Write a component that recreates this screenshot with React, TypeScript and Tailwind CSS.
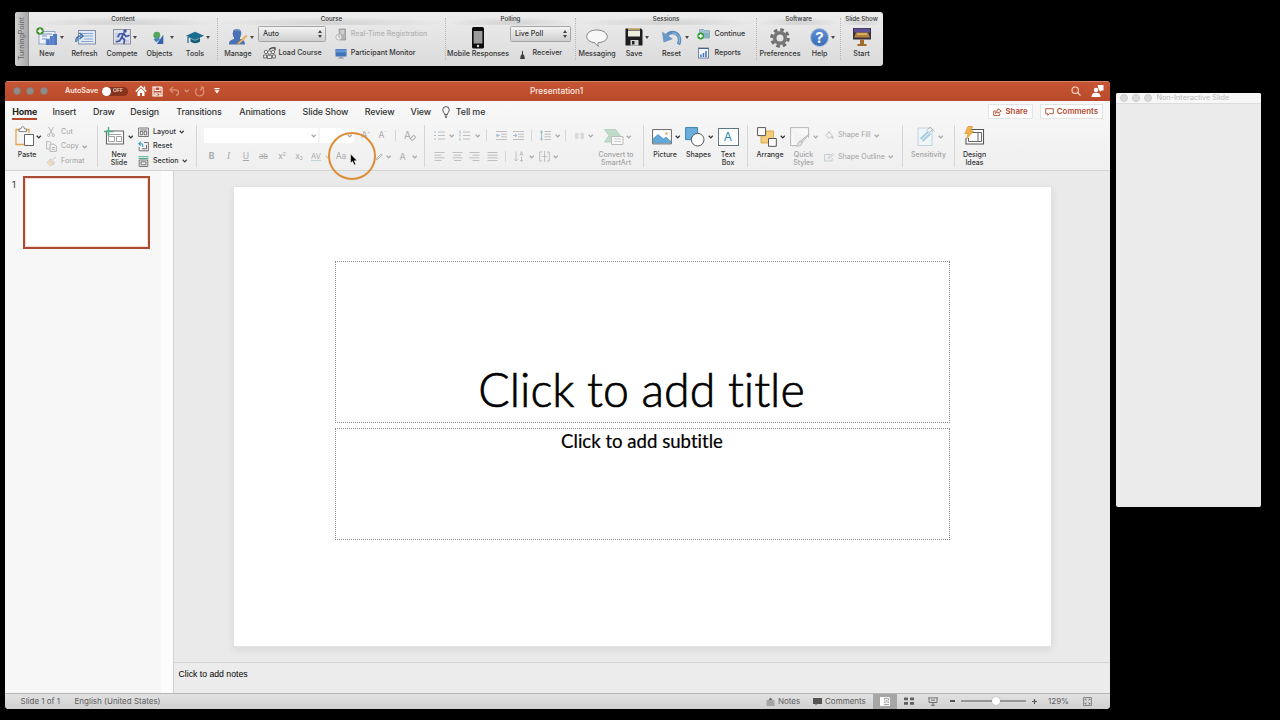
import React from "react";

type P = { children?: React.ReactNode; className?: string };

/* ---------- shared bits ---------- */

const Chevron = ({ className = "text-[#444]" }: P) => (
  <svg viewBox="0 0 6 4" className={`h-[4px] w-[5.500px] shrink-0 ${className}`} fill="none" stroke="currentColor" strokeWidth="1.400">
    <path d="M.8.700 3 3 5.200.700" />
  </svg>
);

const Caret = () => (
  <svg viewBox="0 0 4 3" className="-mr-[6px] ml-[2px] h-[3px] w-[4px] shrink-0">
    <path d="M0 0h4L2 3z" fill="#4a4a4a" />
  </svg>
);

const Slot = ({ children, className = "" }: P) => (
  <div className={`flex h-full shrink-0 items-center justify-center whitespace-nowrap ${className}`}>{children}</div>
);

const Divider = ({ className = "" }: P) => <div className={`w-px shrink-0 bg-[#d6d6d6] ${className}`} />;

/* ---------- TurningPoint toolbar ---------- */

const Group = ({ title, children, className = "" }: P & { title: string }) => (
  <section className={`flex shrink-0 flex-col ${className}`}>
    <h2 className="flex h-[13px] items-center justify-center bg-[radial-gradient(ellipse_50%_45%_at_50%_85%,#d2d2d2,transparent)] text-[6.2px] font-medium whitespace-nowrap text-[#333]">
      {title}
    </h2>
    <div className="flex grow">{children}</div>
  </section>
);

const Tool = ({ label, children, className = "", caret = false }: P & { label: string; caret?: boolean }) => (
  <div className={`flex shrink-0 flex-col items-center ${className}`}>
    <div className="mt-px flex h-[22px] items-center">
      {children}
      {caret && <Caret />}
    </div>
    <span className="flex h-[12px] items-center text-[7.1px] font-medium whitespace-nowrap text-[#333]">{label}</span>
  </div>
);

const Select = ({ value, className = "" }: { value: string; className?: string }) => (
  <div className={`flex h-[16px] items-center justify-between rounded-[1.5px] border border-[#a5a5a5] bg-linear-to-b from-[#f4f4f4] to-[#cfcfcf] pr-[3px] pl-[4px] text-[7.1px] font-medium text-[#333] ${className}`}>
    {value}
    <svg viewBox="0 0 4 8" className="h-[8px] w-[4px]" fill="#444">
      <path d="M0 3h4L2 0zM0 5h4L2 8z" />
    </svg>
  </div>
);

const Dots = ({ className = "" }: P) => <div className={`my-[6px] w-0 shrink-0 border-l border-dotted border-[#b5b5b5] ${className}`} />;

function Toolbar() {
  return (
    <div className="absolute top-[12px] left-[15px] flex h-[54px] w-[868px] overflow-hidden rounded-[3px] bg-linear-to-b from-[#ececec] via-[#e4e4e4] to-[#dadada]">
      <div className="flex w-[14px] shrink-0 items-center justify-center border-r border-[#8e8e8e] bg-linear-to-r from-[#d0d0d0] to-[#a9a9a9]">
        <span className="rotate-180 text-[7.2px] leading-none whitespace-nowrap text-[#666] [writing-mode:vertical-rl]">TurningPoint</span>
      </div>

      <Group title="Content" className="w-[188px]">
        <Tool label="New" caret className="w-[36px]">
          <svg viewBox="0 0 22 20" className="h-[20px] w-[22px]">
            <rect x="3" y="4.500" width="16" height="12.500" fill="#eef2f8" stroke="#8194b5" strokeWidth=".8" />
            <path d="M6 7h10M6 9h5M6 12h5" stroke="#7a93be" strokeWidth="1" />
            <path d="M10 18V12h4V9h3V7h4v11z" fill="#5079c2" />
            <path d="M10 18v-6h4v6M17 18V8" stroke="#86a9e0" strokeWidth=".7" fill="none" />
            <circle cx="4" cy="4" r="3.800" fill="#3f8f2b" />
            <path d="M4 1.700v4.600M1.700 4h4.600" stroke="#fff" strokeWidth="1.500" />
          </svg>
        </Tool>
        <Tool label="Refresh" className="w-[39px]">
          <svg viewBox="0 0 22 18" className="ml-[3px] h-[18px] w-[22px]">
            <rect x="3.500" y="2.500" width="17" height="13.500" fill="#e3e9f2" stroke="#8090aa" />
            <path d="M6 5.500h12M9 8h9M9 11h9M6 13.500h12" stroke="#86a5d4" />
            <path d="M1 14c-.4-4 1.500-6 5-6M4.500 5l3.500 3-3.500 3" stroke="#3f6da8" strokeWidth="1.600" fill="none" />
            <circle cx="2.500" cy="11.500" r="1.600" fill="#6b93c4" />
          </svg>
        </Tool>
        <Tool label="Compete" caret className="w-[36px]">
          <svg viewBox="0 0 18 18" className="-ml-[1px] h-[18px] w-[18px]">
            <rect x=".5" y="1.500" width="17" height="14.500" fill="#dde2ea" stroke="#8f949c" />
            <path d="M2 6h6M2 9h5M2 12h4M12 13h4" stroke="#a9bad6" />
            <circle cx="12" cy="3" r="1.700" fill="#3f55a5" />
            <path d="M11 5 8.500 9.500l3 2-.5 4M8.500 10l-2 3-3 .8M10.500 5.500 6.500 6 5 8.500M11 6l2 2.500 3-1" stroke="#3f55a5" strokeWidth="1.700" fill="none" strokeLinecap="round" />
          </svg>
        </Tool>
        <Tool label="Objects" caret className="w-[39px]">
          <svg viewBox="0 0 14 12" className="-ml-[2px] h-[13px] w-[18px]">
            <circle cx="5" cy="4" r="3.200" fill="#58a65a" />
            <path d="m2 7.500 4-2.200 2 2.500-3.500 2.500z" fill="#4487b8" />
            <path d="M11 3.500v8.500H5z" fill="#3560ad" />
          </svg>
        </Tool>
        <Tool label="Tools" caret className="w-[32px]">
          <svg viewBox="0 0 18 14" className="mt-[2px] h-[14px] w-[18px]">
            <path d="M4.500 5v5.500c2.500 2.300 7 2.300 9.500 0V5z" fill="#155a7a" />
            <path d="M0 4.800 9 .8l9 4-9 4z" fill="#1b6d90" />
            <path d="M9 4.500 2 6.200V12" stroke="#1b6d90" strokeWidth="1.200" fill="none" />
            <path d="M5 7.500 9 9.300l4.500-2" stroke="#d7e6ed" strokeWidth=".6" fill="none" />
          </svg>
        </Tool>
      </Group>
      <Dots />

      <Group title="Course" className="w-[227px]">
        <Tool label="Manage" caret className="w-[40px]">
          <svg viewBox="0 0 20 18" className="h-[18px] w-[20px]">
            <path d="M1 16.500c0-4 2-4.500 5-5.500V9.500C4.500 8 4.500 5 5 3.500 6 .3 12 .3 13 3.500c.5 1.500.3 4.500-1 6V11c3 .8 5 1.500 5 5.500z" fill="#4a71b3" />
            <path d="M7 2.500c2-1 4-1 5 1" stroke="#86a6d9" strokeWidth="1" fill="none" />
            <path d="m9 17 1-2.500 8-7.500 1.500 1.300-8 7.500z" fill="#e09a36" />
            <path d="m10.500 15.800 8-7.500" stroke="#fff0c8" strokeWidth=".6" />
          </svg>
        </Tool>
        <div className="flex w-[68px] shrink-0 flex-col">
          <Select value="Auto" className="mt-[1px]" />
          <div className="mt-[4.500px] flex h-[13px] items-center pl-[5px] text-[7.1px] font-medium whitespace-nowrap text-[#333]">
            <svg viewBox="0 0 13 12" className="mr-[2.500px] h-[12px] w-[13px]" fill="#e9e9e9" stroke="#555" strokeWidth=".8">
              <circle cx="3" cy="5" r="1.700" /><circle cx="10" cy="5" r="1.700" /><circle cx="6.500" cy="5.500" r="1.900" />
              <path d="M.6 11V8h3v3zM9.400 11V8h3v3zM4.400 11.500V8.300h4.200v3.200z" />
              <path d="M6 2.500 9 .8h3v2.500" fill="none" stroke="#333" strokeWidth="1.200" />
            </svg>
            Load Course
          </div>
        </div>
        <div className="flex flex-col pl-[9px] text-[7.1px] font-medium whitespace-nowrap text-[#333]">
          <div className="mt-[1px] flex h-[16px] items-center text-[#b2b2b2]">
            <svg viewBox="0 0 12 13" className="mr-[3.700px] h-[13px] w-[12px]">
              <path d="M4 1h6.500v11H5z" fill="#b4b4b4" stroke="#8c8c8c" strokeWidth=".7" />
              <path d="M5.500 3h3.500M5.500 5h3.500" stroke="#e8e8e8" />
              <circle cx="3.800" cy="9" r="3" fill="#e8e8e8" stroke="#aaa" strokeWidth=".7" />
              <path d="M3.800 7v2h1.500" stroke="#999" strokeWidth=".7" fill="none" />
            </svg>
            Real-Time Registration
          </div>
          <div className="mt-[4.500px] flex h-[13px] items-center">
            <svg viewBox="0 0 12 11" className="mr-[3.700px] h-[11px] w-[12px]">
              <rect x=".5" y="1" width="11" height="7.500" rx=".5" fill="#3f72b7" />
              <path d="M1 1.500h10v3H1z" fill="#6595d2" />
              <path d="M4.500 8.500h3v1.200h1.500v.9H3v-.9h1.500z" fill="#8b97a8" />
            </svg>
            Participant Monitor
          </div>
        </div>
      </Group>
      <Dots />

      <Group title="Polling" className="w-[129px]">
        <Tool label="Mobile Responses" className="w-[64px]">
          <svg viewBox="0 0 12 22" className="mt-px h-[22px] w-[12px]">
            <rect width="12" height="21.500" rx="1.600" fill="#0d0d0d" />
            <rect x="1.600" y="4" width="8.800" height="12.500" fill="#9b9b9b" />
            <circle cx="6" cy="19" r="1.200" fill="#ddd" />
          </svg>
        </Tool>
        <div className="flex flex-col">
          <Select value="Live Poll" className="mt-[1px] w-[61px]" />
          <div className="mt-[4.500px] flex h-[13px] items-center pl-[10px] text-[7.1px] font-medium whitespace-nowrap text-[#333]">
            <svg viewBox="0 0 5 8" className="mt-[4px] mr-[7.500px] h-[8px] w-[5px]" fill="#3d3d3d">
              <path d="M2 0h1v3l1.500 2v1.500L5 8H0l.5-1.500V5L2 3z" />
            </svg>
            Receiver
          </div>
        </div>
      </Group>
      <Dots />

      <Group title="Sessions" className="w-[180px]">
        <Tool label="Messaging" className="w-[42px]">
          <svg viewBox="0 0 22 18" className="mt-[2px] h-[18px] w-[22px]">
            <path d="M10.500 1C4.500 1 .7 4 .7 7.500c0 3 3 5.800 8.300 6.200.5 1.300 1.500 2.800 3.500 3.500-.8-1.300-.8-2.500-.5-3.500 6-.4 9.300-3 9.300-6.200C21.300 4 17 1 10.500 1z" fill="#f7f7f7" stroke="#777" strokeWidth=".9" />
          </svg>
        </Tool>
        <Tool label="Save" caret className="w-[32px]">
          <svg viewBox="0 0 18 18" className="h-[18px] w-[18px]">
            <path d="M.5.500H16l1.500 1.500v15.500H.5z" fill="#1d1d1f" />
            <path d="M3 .5h12v8H3z" fill="#eeeede" />
            <path d="M3 .5h12v1.200H3z" fill="#d7a53e" />
            <path d="M3 1.700h12v1H3z" fill="#555" />
            <path d="M5.500 12h8v5.500h-8z" fill="#d5d5d5" />
            <path d="M7 13h2.500v3.500H7z" fill="#222" />
          </svg>
        </Tool>
        <Tool label="Reset" caret className="w-[43px]">
          <svg viewBox="0 0 22 18" className="h-[18px] w-[22px]">
            <path d="M17.500 16.500c3-6-.5-12-6-12-3 0-5 1.500-6.500 4" stroke="#5f8fc0" strokeWidth="3.400" fill="none" />
            <path d="m1 3.500 1.500 11L12 11z" fill="#6a99c9" />
            <path d="M18 15c2-5-1-10-6.500-10" stroke="#9dbfe2" strokeWidth="1" fill="none" />
          </svg>
        </Tool>
        <div className="flex flex-col pl-[4px] text-[7.1px] font-medium whitespace-nowrap text-[#333]">
          <div className="mt-[1px] flex h-[16px] items-center">
            <svg viewBox="0 0 13 12" className="mr-[4.500px] h-[12px] w-[13px]">
              <path d="M2.500 1.500h4l1 1.200h5V10H2.500z" fill="#a3c3d1" stroke="#6d9eae" strokeWidth=".7" />
              <path d="M3 5h9.500v5H3z" fill="#87b1c4" />
              <circle cx="3.700" cy="8" r="3.400" fill="#36a039" />
              <path d="M3.700 6v4M1.700 8h4" stroke="#fff" strokeWidth="1.300" />
            </svg>
            Continue
          </div>
          <div className="mt-[4.500px] flex h-[13px] items-center">
            <svg viewBox="0 0 13 12" className="mr-[4.500px] h-[12px] w-[13px]">
              <rect x="1.500" y="1" width="10" height="10" fill="#f3f5f9" stroke="#5b6c8f" strokeWidth=".8" />
              <path d="M1.500 1.500h10" stroke="#41629c" strokeWidth="1.200" />
              <path d="M4 10V7.500M6.500 10V6M9 10V4" stroke="#3f74be" strokeWidth="1.500" />
            </svg>
            Reports
          </div>
        </div>
      </Group>
      <Dots />

      <Group title="Software" className="w-[83px]">
        <Tool label="Preferences" className="w-[46px]">
          <svg viewBox="0 0 20 20" className="mt-px h-[20px] w-[20px]">
            <circle cx="10" cy="10" r="8" fill="none" stroke="#6d6d6d" strokeWidth="3.600" strokeDasharray="3.450 2.830" />
            <circle cx="10" cy="10" r="5.300" fill="none" stroke="#757575" strokeWidth="3.600" />
            <circle cx="10" cy="10" r="6.800" fill="none" stroke="#8d8d8d" strokeWidth=".6" />
          </svg>
        </Tool>
        <Tool label="Help" caret className="w-[33px]">
          <div className="mt-px flex h-[19px] w-[19px] items-center justify-center rounded-full border border-[#a9bddb] bg-linear-to-b from-[#5d8fd4] to-[#3a6db5] text-[15px] leading-none font-bold text-white">?</div>
        </Tool>
      </Group>
      <Dots />

      <Group title="Slide Show" className="w-[41px]">
        <Tool label="Start" className="w-[41px]">
          <svg viewBox="0 0 18 20" className="h-[20px] w-[18px]">
            <path d="M0 1h18v11.500H0z" fill="#34303c" />
            <path d="M1 1.500h16v4H1z" fill="#5d4e95" />
            <path d="M3 5.500h12l2 5H1z" fill="#b5813a" />
            <path d="M4 6h10v2H4z" fill="#d9ab61" />
            <path d="M7 12.500h4V17h2.500v2h-9v-2H7z" fill="#a3692a" />
          </svg>
        </Tool>
      </Group>
    </div>
  );
}

/* ---------- PowerPoint window ---------- */

function TitleBar() {
  return (
    <header className="flex h-[20px] shrink-0 items-center bg-linear-to-b from-[#c65534] to-[#b84a2a] shadow-[inset_0_1px_0_#d58267]">
      <div className="flex w-[60px] gap-[5.300px] pl-[8px]">
        <i className="h-[8px] w-[8px] rounded-full border border-[#8a7a75] bg-[#918b89]" />
        <i className="h-[8px] w-[8px] rounded-full border border-[#8a7a75] bg-[#918b89]" />
        <i className="h-[8px] w-[8px] rounded-full border border-[#8a7a75] bg-[#918b89]" />
      </div>
      <span className="w-[37px] text-[7.200px] font-semibold tracking-[-0.005em] whitespace-nowrap text-[#fbe9e3]">AutoSave</span>
      <div className="flex h-[9px] w-[26px] items-center rounded-full bg-[#86331d]">
        <i className="h-[9px] w-[9px] rounded-full bg-white" />
        <span className="pl-[2px] text-[5.200px] font-semibold text-[#f0d5cc]">OFF</span>
      </div>
      <svg viewBox="0 0 12 12" className="ml-[7px] h-[12px] w-[12px]">
        <path d="M.7 6.500 6 1.500l5.300 5" stroke="#fff" strokeWidth="1.300" fill="none" />
        <path d="M2.500 6.700 6 3.500l3.500 3.200V11H7V8H5v3H2.500zM8.800 1.500h1.400v3L8.800 3.200z" fill="#fff" />
      </svg>
      <svg viewBox="0 0 11 11" className="ml-[5px] h-[11px] w-[11px]" fill="none" stroke="#fff" strokeWidth="1.200">
        <path d="M1 1h8l1 1v8H1z" />
        <path d="M3 1v3.500h5V1M3 10V7h5v3" />
        <path d="M4 8.500h1.500" />
      </svg>
      <svg viewBox="0 0 11 10" className="ml-[6px] h-[10px] w-[11px]" fill="none" stroke="#dc957f" strokeWidth="1.200">
        <path d="M4 .8 1 3.800l3 3M1 3.800h5.500c4 0 4 5 .5 5.500" />
      </svg>
      <Chevron className="ml-[4px] text-[#dc957f]" />
      <svg viewBox="0 0 11 11" className="ml-[4.500px] h-[11px] w-[11px]" fill="none" stroke="#dc957f" strokeWidth="1.200">
        <path d="M3 2.500C0 5.500 2 10 5.500 10S11 6.500 9 3.800M6.500 1 9.300 1 9.300 4M9 1.200C8 2 7 3 6.500 4.500" />
      </svg>
      <svg viewBox="0 0 6 6" className="ml-[8.500px] h-[6px] w-[6px]" fill="#fff">
        <path d="M.5 0h5v1.200h-5zM.5 2.300h5L3 5.500z" />
      </svg>
      <h1 className="ml-[310.500px] text-[8.300px] font-medium whitespace-nowrap text-[#fbe9e3]">Presentation1</h1>
      <svg viewBox="0 0 10 10" className="ml-auto h-[10px] w-[10px]" fill="none" stroke="#f6d8ce" strokeWidth="1.100">
        <circle cx="4.200" cy="4.200" r="3.200" />
        <path d="m6.500 6.500 3 3" />
      </svg>
      <svg viewBox="0 0 13 12" className="mr-[6px] ml-[10px] h-[12px] w-[13px]" fill="#fff">
        <path d="M6.500 0H12.500v5.500H10.500L9 7V5.500H8z" />
        <circle cx="5" cy="5" r="2.200" />
        <path d="M.5 12c0-3 1.500-4.200 4.500-4.200S9.500 9 9.500 12z" />
      </svg>
    </header>
  );
}

function Tabs() {
  return (
    <nav className="flex h-[21px] shrink-0 items-center pl-[7.300px] text-[8.900px] font-medium tracking-[-0.014em] whitespace-nowrap text-[#333]">
      <div className="flex h-full w-[40.200px] shrink-0">
        <span className="flex h-[19px] items-center border-b-2 border-[#b54a2b] pt-[4px] text-[8.900px] font-bold tracking-[-0.02em] text-[#222]">Home</span>
      </div>
      <span className="w-[40.600px] shrink-0">Insert</span>
      <span className="w-[37.200px] shrink-0">Draw</span>
      <span className="w-[46px] shrink-0">Design</span>
      <span className="w-[63px] shrink-0">Transitions</span>
      <span className="w-[63.300px] shrink-0">Animations</span>
      <span className="w-[62.300px] shrink-0">Slide Show</span>
      <span className="w-[45.700px] shrink-0">Review</span>
      <span className="w-[31.500px] shrink-0">View</span>
      <svg viewBox="0 0 8 12" className="mr-[5.800px] h-[12px] w-[8px]" fill="none" stroke="#444" strokeWidth=".9">
        <path d="M2.500 8.500C2.500 6.500.8 6 .8 3.800a3.200 3.200 0 0 1 6.400 0C7.200 6 5.500 6.500 5.500 8.500zM2.700 10h2.600M3 11.300h2" />
      </svg>
      <span>Tell me</span>
      <div className="mr-[7px] ml-auto flex gap-[7px] text-[7.900px] font-semibold tracking-normal text-[#b1492e]">
        <button className="flex h-[15px] w-[45px] items-center justify-center gap-[3px] border border-[#e4e4e4] bg-white">
          <svg viewBox="0 0 9 8" className="h-[8px] w-[9px]" fill="none" stroke="currentColor" strokeWidth=".9">
            <path d="M2.500 3H.7v4.400h6V5.500M5 .7 8.300 3 5 5.200V4C3.800 4 3 4.500 2.500 5.500 2.600 3.500 3.500 2.200 5 2z" />
          </svg>
          Share
        </button>
        <button className="flex h-[15px] w-[63px] items-center justify-center gap-[3px] border border-[#e4e4e4] bg-white">
          <svg viewBox="0 0 9 8" className="h-[8px] w-[9px]" fill="none" stroke="currentColor" strokeWidth=".9">
            <path d="M.7.700h7.600v5H4.500L2.700 7.300V5.700h-2z" />
          </svg>
          Comments
        </button>
      </div>
    </nav>
  );
}

const Big = ({ icon, lines, className = "", muted = false }: { icon: React.ReactNode; lines: string[]; className?: string; muted?: boolean }) => (
  <div className={`flex shrink-0 flex-col items-center ${className}`}>
    <div className="mt-[4px] flex h-[21px] items-center">{icon}</div>
    <div className={`mt-[4px] flex flex-col items-center text-[7px] leading-[8px] font-medium whitespace-nowrap ${muted ? "text-[#a3a3a3]" : "text-[#333]"}`}>
      {lines.map((l) => (
        <span key={l}>{l}</span>
      ))}
    </div>
  </div>
);

const Row = ({ icon, children, chevron, muted = false }: P & { icon: React.ReactNode; chevron?: boolean; muted?: boolean }) => (
  <div className={`flex h-[14.500px] items-center text-[7.100px] whitespace-nowrap ${muted ? "text-[#a3a3a3]" : "font-medium text-[#333]"}`}>
    <span className="flex w-[15px] items-center">{icon}</span>
    {children}
    {chevron && <Chevron className={muted ? "ml-[3.500px] text-[#a3a3a3]" : "ml-[3.500px] text-[#444]"} />}
  </div>
);

const Lines = ({ d, accent }: { d: string; accent?: string }) => (
  <svg viewBox="0 0 11 11" className="h-[11px] w-[11px]" fill="none" stroke="#b9b9b9" strokeWidth=".9">
    <path d={d} />
    {accent && <path d={accent} stroke="#9fc5d4" strokeWidth="1.200" />}
  </svg>
);

const Dim = () => <Chevron className="text-[#a8a8a8]" />;

function Ribbon() {
  return (
    <div className="flex h-[49px] shrink-0 border-b border-[#d3d3d3]">
      {/* Clipboard */}
      <div className="flex w-[92px] shrink-0">
        <Big
          className="ml-[5px] w-[34px]"
          lines={["Paste"]}
          icon={
            <>
              <svg viewBox="0 0 20 21" className="-ml-[4px] h-[21px] w-[20px]" fill="none">
                <path d="M4 3.500H1v15h8M11 3.500h3V7" stroke="#e3a44c" strokeWidth="1.300" />
                <path d="M4 5.500V3h2c0-3 3.500-3 3.500 0h2v2.500z" fill="#fff" stroke="#777" strokeWidth=".9" />
                <path d="M9.500 8.500h9v11h-9z" fill="#fff" stroke="#666" />
              </svg>
              <Chevron className="-mr-[6px] ml-[1.500px] text-[#333]" />
            </>
          }
        />
        <div className="flex flex-col pt-[3px] pl-[2px]">
          <Row muted icon={
            <svg viewBox="0 0 8 10" className="ml-px h-[10px] w-[8px]" fill="none" stroke="#b0b0b0" strokeWidth=".9">
              <path d="M1.500 0 5.500 7M6.500 0l-4 7" /><circle cx="1.700" cy="8.300" r="1.200" /><circle cx="6.300" cy="8.300" r="1.200" />
            </svg>}>Cut</Row>
          <Row muted chevron icon={
            <svg viewBox="0 0 11 11" className="h-[11px] w-[11px]" fill="none" stroke="#b0b0b0" strokeWidth=".9">
              <path d="M4 8H.6V.6h3L5 2v1M4 3.200h4l2.400 2v5.200H4zM5.800 6.500h3M5.800 8.300h3" />
            </svg>}>Copy</Row>
          <Row muted icon={
            <svg viewBox="0 0 11 11" className="h-[11px] w-[11px]" fill="none" stroke="#b5b5b5" strokeWidth=".9">
              <path d="M7 3.500 9.500 1M4.500 3l4 4-1.200 1.200-4-4z" /><path d="M3.300 4.500 1 6.500 4.500 10l2.500-2z" fill="#f2e2c5" stroke="#ddc9a6" />
            </svg>}>Format</Row>
        </div>
      </div>
      <Divider className="my-[3px]" />

      {/* Slides */}
      <div className="flex w-[98px] shrink-0">
        <Big
          className="ml-[4px] w-[34px]"
          lines={["New", "Slide"]}
          icon={
            <>
              <svg viewBox="0 0 21 21" className="-ml-[9px] h-[21px] w-[21px]" fill="none">
                <path d="M2.500 5h17v13h-17z" fill="#fff" stroke="#666" strokeWidth="1.100" />
                <path d="M5 8.500h12M4.500 10.500h6v5h-6zM12.500 10.500h5v5h-5z" stroke="#888" strokeWidth=".8" />
                <path d="M4.500 1v9M0 5.500h9.500" stroke="#4fae86" strokeWidth="1.400" />
              </svg>
              <Chevron className="-mr-[8px] ml-[3px] text-[#333]" />
            </>
          }
        />
        <div className="flex flex-col pt-[3px] pl-[2px]">
          <Row chevron icon={
            <svg viewBox="0 0 11 11" className="h-[11px] w-[11px]" fill="none" stroke="#666" strokeWidth=".9">
              <path d="M.6 1h9.800v8.500H.6zM2 3h7M2.300 4.500h2.500v3.300H2.300zM6.200 4.500h2.500v3.300H6.200z" />
            </svg>}>Layout</Row>
          <Row icon={
            <svg viewBox="0 0 11 11" className="h-[11px] w-[11px]" fill="none" stroke="#666" strokeWidth=".9">
              <path d="M6 1.500h4.400v8.300H1.200V6M4 7.800h4.500V4" /><path d="M3 .7.800 2.700 3 4.700M1 2.700h2.500C5 2.700 5 5 4.500 6" stroke="#3a9bc4" strokeWidth="1.100" />
            </svg>}>Reset</Row>
          <Row chevron icon={
            <svg viewBox="0 0 11 11" className="h-[11px] w-[11px]" fill="none" stroke="#666" strokeWidth=".9">
              <path d="M1.200 4h8.600v6.500H1.200zM3 5.800h5v3H3z" /><path d="M.5.700h10M.5 2.500h10" stroke="#3fa583" />
            </svg>}>Section</Row>
        </div>
      </div>
      <Divider className="my-[3px]" />

      {/* Font */}
      <div className="flex w-[227px] shrink-0 flex-col pl-[7px] text-[8.500px] text-[#aaa]">
        <div className="mt-[6px] flex h-[15px]">
          <div className="flex h-[15px] w-[114px] shrink-0 items-center justify-end bg-white pr-[2px]"><Dim /></div>
          <div className="ml-[2px] flex h-[15px] w-[34px] shrink-0 items-center justify-end bg-white pr-[2px]"><Dim /></div>
          <Slot className="ml-[2px] w-[19px] text-[9.500px]">A<sup className="text-[5px]">^</sup></Slot>
          <Slot className="w-[15px] text-[8.500px]">A<sup className="text-[5px]">ˇ</sup></Slot>
          <Divider className="mx-[5px] my-[2px]" />
          <Slot className="w-[18px] text-[10px]">A<i className="mt-[4px] -ml-px h-[4px] w-[6px] -rotate-45 rounded-[1px] border border-[#b5b5b5]" /></Slot>
        </div>
        <div className="mt-[6px] flex h-[15px]">
          <Slot className="w-[15px] font-bold">B</Slot>
          <Slot className="w-[19px] font-['Liberation_Serif',serif] text-[9.500px] italic">I</Slot>
          <Slot className="w-[16px] underline">U</Slot>
          <Slot className="w-[19px] text-[7.500px] line-through">ab</Slot>
          <Slot className="w-[18px]">x<sup className="text-[5px]">2</sup></Slot>
          <Slot className="w-[16px]">x<sub className="text-[5px]">2</sub></Slot>
          <Slot className="w-[18px] flex-col text-[7.500px] leading-[7px]">AV<i className="h-px w-[10px] bg-[#c5d3da]" /></Slot>
          <Slot className="w-[6px]"><Chevron className="text-[#e3c4ab]" /></Slot>
          <Slot className="w-[20px]">Aa</Slot>
          <Slot className="w-[6px]" />
          <Slot className="w-[28px] justify-end">
            <svg viewBox="0 0 8 8" className="mr-[2px] h-[8px] w-[8px]" fill="none" stroke="#b5b5b5"><path d="m1 7 1-2L6 1l1.200 1L3 6z" /></svg>
          </Slot>
          <Slot className="w-[8px]"><Dim /></Slot>
          <Slot className="w-[19px] text-[9px]">A</Slot>
          <Slot className="w-[5px]"><Dim /></Slot>
        </div>
      </div>
      <Divider className="my-[3px]" />

      {/* Paragraph */}
      <div className="flex w-[218px] shrink-0">
        <div className="flex w-[164px] shrink-0 flex-col pl-[4px]">
          <div className="mt-[6px] flex h-[15px]">
            <Slot className="w-[20px]"><Lines d="M4 2h7M4 5.500h7M4 9h7" accent="M0 2h2M0 5.500h2M0 9h2" /></Slot>
            <Slot className="w-[5px]"><Dim /></Slot>
            <Slot className="w-[21px]"><Lines d="M4 2h7M4 5.500h7M4 9h7" accent="M1 .5v3M1 4.500v2M1 8v2.500" /></Slot>
            <Slot className="w-[5px]"><Dim /></Slot>
            <Divider className="mx-[6px] my-[2px]" />
            <Slot className="w-[17px]"><Lines d="M0 1.500h11M5 4.200h6M5 6.800h6M0 9.500h11" accent="M4 5.500H.5M2 4 .5 5.500 2 7" /></Slot>
            <Slot className="w-[17px]"><Lines d="M0 1.500h11M5 4.200h6M5 6.800h6M0 9.500h11" accent="M0 5.500h3.500M2 4l1.500 1.500L2 7" /></Slot>
            <Divider className="mr-[4px] ml-[4px] my-[2px]" />
            <Slot className="w-[19px]"><Lines d="M4.500 1.500H11M4.500 4.200H11M4.500 6.800H11M4.500 9.500H11" accent="M1.500 1v9M.3 2.500 1.500 1l1.200 1.500M.3 8.500 1.500 10l1.200-1.500" /></Slot>
            <Slot className="w-[5px]"><Dim /></Slot>
            <Divider className="mx-[5px] my-[2px]" />
            <Slot className="w-[16px]"><Lines d="M1 4h3.500M1 6h3.500M1 8h3.500M6.500 4H10M6.500 6H10M6.500 8H10" /></Slot>
            <Slot className="w-[7px]"><Dim /></Slot>
          </div>
          <div className="mt-[6px] flex h-[15px]">
            <Slot className="w-[20px]"><Lines d="M.5 1.500h10M.5 4.200h7M.5 6.800h10M.5 9.500h7" /></Slot>
            <Slot className="w-[16px]"><Lines d="M.5 1.500h10M2 4.200h7M.5 6.800h10M2 9.500h7" /></Slot>
            <Slot className="w-[18px]"><Lines d="M.5 1.500h10M3.500 4.200h7M.5 6.800h10M3.500 9.500h7" /></Slot>
            <Slot className="w-[18px]"><Lines d="M.5 1.500h10M.5 4.200h10M.5 6.800h10M.5 9.500h10" /></Slot>
            <Divider className="mx-[4px] my-[2px]" />
            <Slot className="w-[19px]"><Lines d="M2 .5v9.500M.5 8.500 2 10l1.500-1.500M6 4.500 7.500.5 9 4.500M6.500 3.500h2M7.500 5.500v5M6 9l1.500 1.500L9 9" /></Slot>
            <Slot className="w-[5px]"><Dim /></Slot>
            <Slot className="w-[20px]"><Lines d="M3 1H.7v9H3M8 1h2.300v9H8M5.500 0v11M3 5.500h5" /></Slot>
            <Slot className="w-[4px]"><Dim /></Slot>
          </div>
        </div>
        <Big
          muted
          className="w-[54px]"
          lines={["Convert to", "SmartArt"]}
          icon={
            <>
              <svg viewBox="0 0 20 18" className="-ml-[4px] h-[18px] w-[20px]">
                <path d="M.5 1.500h11L16.500 8 12 14H.5L5 7.500z" fill="#c0dcc8" stroke="#a3c9ae" strokeWidth=".7" />
                <path d="M7.500 8.500h11.500v8H7.500z" fill="#fafafa" stroke="#bbb" />
                <path d="M10 11h7M10 13.500h7" stroke="#ccc" />
              </svg>
              <Chevron className="-mr-[8px] ml-[2px] text-[#a8a8a8]" />
            </>
          }
        />
      </div>
      <Divider className="my-[3px]" />

      {/* Insert */}
      <div className="flex w-[103px] shrink-0">
        <Big
          className="ml-[4px] w-[34px]"
          lines={["Picture"]}
          icon={
            <>
              <svg viewBox="0 0 20 16" className="mt-[1px] -ml-[6px] h-[16px] w-[20px]">
                <path d="M.6.600h18.800v14.300H.6z" fill="#fff" stroke="#666" />
                <path d="M1.500 13.800V9.500l4.500-4 5.500 4.500 2.500-2 4.500 4v1.800z" fill="#62aadb" stroke="#377eb0" strokeWidth=".6" />
                <circle cx="14.500" cy="4.500" r="1.300" fill="#e7b24e" />
              </svg>
              <Chevron className="-mr-[8px] ml-[3px] text-[#333]" />
            </>
          }
        />
        <Big
          className="w-[33px]"
          lines={["Shapes"]}
          icon={
            <>
              <svg viewBox="0 0 20 20" className="-ml-[6px] h-[20px] w-[20px]">
                <path d="M.6.600h12v12H.6z" fill="#69aedd" stroke="#3d83b5" />
                <circle cx="12.700" cy="12.700" r="6.300" fill="#fff" stroke="#555" />
              </svg>
              <Chevron className="-mr-[8px] ml-[3px] text-[#333]" />
            </>
          }
        />
        <Big
          className="w-[26px]"
          lines={["Text", "Box"]}
          icon={
            <div className="flex h-[18px] w-[21px] items-center justify-center border border-[#5d7885] bg-white text-[12px] leading-none text-[#2f86b8]">A</div>
          }
        />
      </div>
      <Divider className="my-[3px]" />

      {/* Arrange */}
      <div className="flex w-[154px] shrink-0">
        <Big
          className="ml-[5px] w-[34px]"
          lines={["Arrange"]}
          icon={
            <>
              <svg viewBox="0 0 20 20" className="-ml-[6px] h-[20px] w-[20px]">
                <path d="M4 4h12.500v12H4z" fill="#f3cd7c" stroke="#dca94c" />
                <path d="M.6.600h8v8h-8zM11.500 11.500h7.800v7.800h-7.800z" fill="#fff" stroke="#555" />
              </svg>
              <Chevron className="-mr-[8px] ml-[3px] text-[#333]" />
            </>
          }
        />
        <Big
          muted
          className="w-[33px]"
          lines={["Quick", "Styles"]}
          icon={
            <>
              <svg viewBox="0 0 20 20" className="-ml-[6px] h-[20px] w-[20px]" fill="none" stroke="#b5b5b5">
                <path d="M.6.600h18v10M.6.600v18h6" fill="#f8f8f8" />
                <path d="m19 7.500-7 8-1.500-1.500 8-6.500zM10.500 14c-2 0-2 3-4.500 5 3 .5 6-.5 6-3.500z" fill="#dce4e9" />
              </svg>
              <Chevron className="-mr-[8px] ml-[3px] text-[#a8a8a8]" />
            </>
          }
        />
        <div className="flex flex-col pt-[6px] pl-[4px]">
          <div className="flex h-[15px] items-center text-[7.100px] whitespace-nowrap text-[#a3a3a3]">
            <svg viewBox="0 0 9 9" className="mr-[4px] ml-[1px] h-[9px] w-[9px]" fill="none" stroke="#b8b8b8" strokeWidth=".8">
              <path d="M4 1 1 4.500 4 7.500l3-3zM4 1V0M7.500 5c1 1.500 1 2.500 0 2.500s-1-1 0-2.500" />
            </svg>
            Shape Fill
            <Chevron className="ml-[3.500px] text-[#a8a8a8]" />
          </div>
          <div className="mt-[6.500px] flex h-[15px] items-center text-[7.100px] whitespace-nowrap text-[#a3a3a3]">
            <svg viewBox="0 0 10 9" className="mr-[4px] h-[9px] w-[10px]" fill="none" stroke="#b5c3ca" strokeWidth=".8">
              <path d="M6 1.500H.6V8h7.500V5M4 5.500l.5-1.500L8.500.5l1 1L5.500 5z" />
            </svg>
            Shape Outline
            <Chevron className="ml-[3.500px] text-[#a8a8a8]" />
          </div>
        </div>
      </div>
      <Divider className="my-[3px]" />

      <div className="flex w-[51px] shrink-0">
        <Big
          muted
          className="w-[51px]"
          lines={["Sensitivity"]}
          icon={
            <>
              <svg viewBox="0 0 20 21" className="-ml-[4px] h-[21px] w-[20px]" fill="none">
                <path d="M2 2h14v17.500H2z" fill="#f0f5f8" stroke="#c2d3dc" />
                <path d="m4.500 13 8-7.500M6.500 15l8-7.500" stroke="#a7cde0" strokeWidth="2" />
                <path d="M11 4.500 14 1l2.500 2.500M13.500 6.500 17 3.500l1.500 2" stroke="#aebcc4" />
              </svg>
              <Chevron className="-mr-[6px] ml-[2px] text-[#a8a8a8]" />
            </>
          }
        />
      </div>
      <Divider className="my-[3px]" />

      <Big
        className="w-[39px]"
        lines={["Design", "Ideas"]}
        icon={
          <svg viewBox="0 0 21 20" className="-mt-[2px] h-[20px] w-[21px]" fill="none">
            <path d="M4 3.500h15.500v14.500H2V12" fill="#fff" stroke="#555" strokeWidth="1.100" />
            <path d="M8 6.500h9.500M14 6.500V15.500M4.500 15.500h13v-9M4.500 12v3.500" stroke="#666" />
            <path d="M4 .5h4.500L6.500 5h3L2.500 13 4 7.500H.8z" fill="#f0b44c" stroke="#d8912d" strokeWidth=".7" />
          </svg>
        }
      />
    </div>
  );
}

function Workspace() {
  return (
    <div className="flex grow">
      <aside className="flex w-[156px] shrink-0 bg-[#f7f7f7] pt-[5px] text-[9px] text-[#333]">
        <span className="w-[18px] pt-[3px] pl-[7px] leading-[12px]">1</span>
        <div className="h-[73px] w-[127px] border-2 border-[#ab4b33] bg-white shadow-[inset_0_0_0_1px_#f3d9d1]" />
      </aside>
      <div className="w-[13px] shrink-0 border-r border-[#d2d2d2] bg-[#fcfcfc]" />
      <main className="flex grow flex-col bg-[#eaeaea]">
        <div className="flex h-[491px] shrink-0 pt-[15px] pl-[59px]">
          <div className="flex h-[461px] w-[819px] flex-col border border-[#e2e2e2] bg-white pt-[74px] pl-[101px] font-[Lato,sans-serif] text-black shadow-[0_3px_8px_#00000014] [font-variant-ligatures:none]">
            <div className="flex h-[162px] w-[615px] items-end justify-center border border-dotted border-[#888] pr-[2px] text-[46.500px] leading-[66px] font-light whitespace-nowrap [-webkit-text-stroke:0.7px_#000]">
              Click to add title
            </div>
            <div className="mt-[5px] flex h-[112px] w-[615px] items-start justify-center border border-dotted border-[#888] pr-[1px] text-[18.600px] leading-[25px] whitespace-nowrap [-webkit-text-stroke:0.2px_#000]">
              Click to add subtitle
            </div>
          </div>
        </div>
        <div className="flex grow border-t border-[#d2d2d2] bg-[#ececec] pt-[5px] pl-[4.500px] font-['Liberation_Sans',sans-serif] text-[8.700px] leading-[12px] text-black">Click to add notes</div>
      </main>
    </div>
  );
}

function StatusBar() {
  return (
    <footer className="flex h-[16px] shrink-0 items-center border-t border-[#b5b5b5] bg-linear-to-b from-[#e2e2e2] to-[#d0d0d0] pb-[1px] pl-[15.500px] text-[8px] whitespace-nowrap text-[#5c5c5c]">
      <span className="w-[54px] shrink-0">Slide 1 of 1</span>
      <span>English (United States)</span>
      <div className="ml-auto flex h-full w-[344px] shrink-0 items-center">
        <svg viewBox="0 0 9 9" className="mr-[3px] h-[9px] w-[9px]" fill="none" stroke="#666" strokeWidth=".9">
          <path d="M.5 4h8M.5 6h8M.5 8h8" /><path d="M4.500.500 6.500 3h-4z" fill="#666" stroke="none" />
        </svg>
        <span className="w-[35px] shrink-0">Notes</span>
        <svg viewBox="0 0 9 9" className="mr-[3px] h-[9px] w-[9px]" fill="#555"><path d="M0 1h9v6H4L2.500 8.800V7H0z" /></svg>
        <span className="w-[48px] shrink-0">Comments</span>
        <div className="-mb-px flex h-[15px] w-[24px] shrink-0 items-center justify-center bg-[#a6a6a6]">
          <svg viewBox="0 0 10 9" className="h-[9px] w-[10px]" fill="none" stroke="#fff" strokeWidth=".9"><path d="M.5.500h9v8h-9zM3.500.500v8M5 2.500h3v2.500H5zM3.500 6.500h6" /><path d="M.5.500h2.500v8H.5z" fill="#fff" /></svg>
        </div>
        <Slot className="w-[24px]">
          <svg viewBox="0 0 10 8" className="h-[8px] w-[10px]" fill="#606060"><path d="M0 .5h4v2.700H0zM6 .5h4v2.700H6zM0 5h4v2.700H0zM6 5h4v2.700H6z" /></svg>
        </Slot>
        <Slot className="w-[24px]">
          <svg viewBox="0 0 10 9" className="h-[9px] w-[10px]" fill="none" stroke="#666" strokeWidth=".9"><path d="M0 .9h10M1 1v4.500h8V1M3 3.200h4M5 5.500V8M3 8.300h4" /></svg>
        </Slot>
        <Slot className="w-[15px]"><i className="h-[1.500px] w-[5px] bg-[#555]" /></Slot>
        <div className="ml-[1px] flex h-full w-[65px] shrink-0 items-center">
          <i className="h-[2px] w-[31px] bg-[#979797]" />
          <i className="h-[8px] w-[8px] rounded-full bg-white shadow-[0_0_1px_#777]" />
          <i className="h-[2px] w-[26px] bg-[#979797]" />
        </div>
        <Slot className="w-[16px]">
          <svg viewBox="0 0 5 5" className="h-[5px] w-[5px]" stroke="#555" strokeWidth="1.200"><path d="M2.500 0v5M0 2.500h5" /></svg>
        </Slot>
        <span className="ml-[6px] w-[34.500px] shrink-0">129%</span>
        <svg viewBox="0 0 9 9" className="h-[9px] w-[9px]" fill="none" stroke="#777" strokeWidth=".8">
          <path d="M.5.500h8v8h-8zM2 3.500V2h1.500M5.500 2H7v1.500M7 5.500V7H5.500M3.500 7H2V5.500M2 2l1.500 1.500M7 2 5.500 3.500M2 7l1.500-1.500M7 7 5.500 5.500" />
        </svg>
      </div>
    </footer>
  );
}

export default function App() {
  return (
    <div className="relative h-[720px] w-[1280px] overflow-hidden bg-black font-[Inter,sans-serif]">
      <Toolbar />

      <div className="absolute top-[81px] left-[5px] flex h-[628px] w-[1105px] flex-col overflow-hidden rounded-[4px] bg-[#ececec]">
        <TitleBar />
        <div className="flex h-[70px] shrink-0 flex-col bg-linear-to-b from-[#f8f8f8] to-[#efefef]">
          <Tabs />
          <Ribbon />
        </div>
        <Workspace />
        <StatusBar />
      </div>

      <div className="absolute top-[93px] left-[1116px] flex h-[414px] w-[145px] flex-col overflow-hidden rounded-[2px] bg-[#ebebeb]">
        <div className="flex h-[11px] shrink-0 items-center border-b border-[#dcdcdc] bg-[#f7f7f7] pl-[4px] text-[7.300px] whitespace-nowrap text-[#b9b9b9]">
          <i className="mr-[4px] h-[8px] w-[8px] rounded-full border border-[#cbcbcb] bg-[#dadada]" />
          <i className="mr-[4px] h-[8px] w-[8px] rounded-full border border-[#cbcbcb] bg-[#dadada]" />
          <i className="mr-[4.500px] h-[8px] w-[8px] rounded-full border border-[#cbcbcb] bg-[#dadada]" />
          Non-Interactive Slide
        </div>
      </div>

      {/* Pointer highlight */}
      <div className="absolute top-[132px] left-[328px] h-[48px] w-[48px] rounded-full border-2 border-[#dd8d35]" />
      <svg viewBox="0 0 8 12" className="absolute top-[153px] left-[350px] h-[13px] w-[8px]">
        <path d="M.6.600v9l2-1.800 1.500 3.600 1.600-.7-1.500-3.500h2.900z" fill="#000" stroke="#fff" strokeWidth=".5" />
      </svg>
    </div>
  );
}
